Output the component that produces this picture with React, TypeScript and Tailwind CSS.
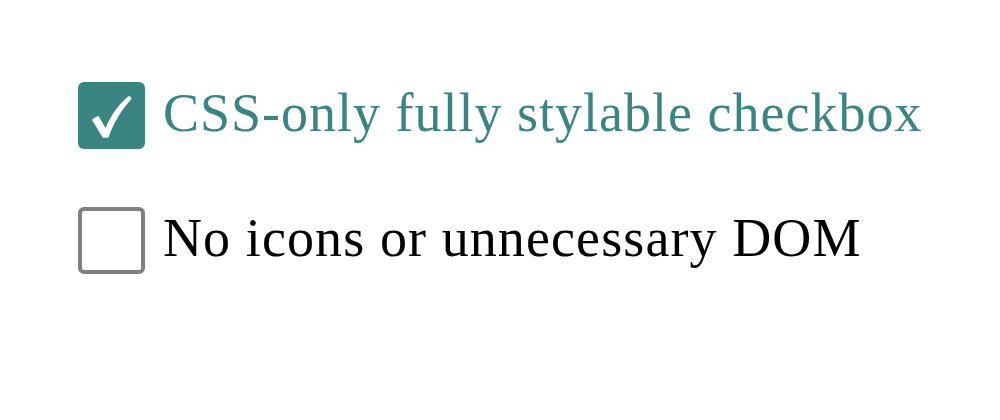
export default function App() {
  return (
    <div
      className="w-[1000px] h-[420px] bg-white pl-[78px] pt-[82px] flex flex-col gap-[58px]"
      style={{ fontFamily: '"Liberation Serif", "Times New Roman", serif' }}
    >
      <label className="flex items-center gap-[18px] text-[54px] leading-none tracking-[1px] text-[#3a8482]">
        <span className="w-[67px] h-[67px] shrink-0 rounded-[6px] bg-[#3a8482] flex items-center justify-center">
          <svg width="67" height="67" viewBox="0 0 67 67">
            <path
              d="M14 38 C16 36 18 34.5 20.5 34 L27.5 46 C33 33 41 22 50 14.5 C52 14 53.5 15 53.5 17 C44 27 36 40 30.5 55.5 L25 56 Z"
              fill="#ffffff"
            />
          </svg>
        </span>
        <span className="mb-[5px]">CSS-only fully stylable checkbox</span>
      </label>
      <label className="flex items-center gap-[18px] text-[54px] leading-none tracking-[1.1px] text-black">
        <span className="w-[67px] h-[67px] shrink-0 rounded-[6px] border-[4px] border-[#808080] bg-white"></span>
        <span className="mb-[5px]">No icons or unnecessary DOM</span>
      </label>
    </div>
  );
}
